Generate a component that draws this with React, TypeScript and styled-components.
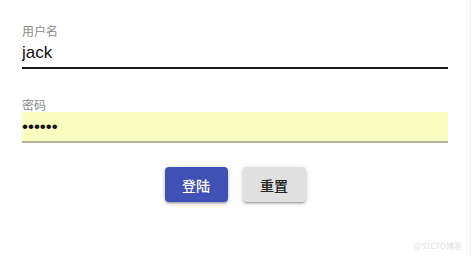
import React from "react";
import styled, { createGlobalStyle } from "styled-components";

const Global = createGlobalStyle`
  html, body { margin: 0; padding: 0; background: #fff; }
  body { font-family: "Liberation Sans", "Noto Sans CJK SC", sans-serif; }
  * { box-sizing: border-box; }
`;

const Page = styled.div`
  position: relative;
  width: 471px;
  height: 256px;
  border-right: 1px solid #f2f2f2;
  padding: 23px 0 0 22px;
`;

const Form = styled.form`
  width: 426px;
  display: flex;
  flex-direction: column;
`;

const Field = styled.div<{ $gap?: number }>`
  display: flex;
  flex-direction: column;
  margin-top: ${(p) => p.$gap ?? 0}px;
`;

const Label = styled.label`
  font-family: "Noto Sans CJK SC", sans-serif;
  font-size: 12px;
  line-height: 15px;
  color: #8a8a8a;
`;

const Input = styled.input<{ $autofill?: boolean }>`
  display: block;
  width: 100%;
  height: 31px;
  margin: 0;
  padding: 0;
  border: none;
  border-bottom: 2px solid ${(p) => (p.$autofill ? "#b3b39c" : "#1a1a1a")};
  background: ${(p) => (p.$autofill ? "#fafdc0" : "transparent")};
  font-family: "Liberation Sans", sans-serif;
  font-size: 17px;
  color: #111;
  outline: none;
`;

const Actions = styled.div`
  display: flex;
  justify-content: center;
  gap: 15px;
  margin-top: 24px;
`;

const Button = styled.button<{ $primary?: boolean }>`
  width: 63px;
  height: 35px;
  border: none;
  border-radius: 4px;
  font-family: "Noto Sans CJK SC", sans-serif;
  font-size: 14px;
  font-weight: 500;
  background: ${(p) => (p.$primary ? "#3f51b5" : "#e0e0e0")};
  color: ${(p) => (p.$primary ? "#fff" : "#222")};
  box-shadow: 0 1px 5px rgba(0, 0, 0, 0.2), 0 2px 2px rgba(0, 0, 0, 0.14),
    0 3px 1px -2px rgba(0, 0, 0, 0.12);
  cursor: pointer;
`;

const Watermark = styled.div`
  position: absolute;
  right: 8px;
  bottom: 5px;
  font-family: "Noto Sans CJK SC", sans-serif;
  font-size: 8px;
  color: #e2e2e2;
`;

export default function App() {
  return (
    <>
      <Global />
      <Page>
        <Form onSubmit={(e) => e.preventDefault()}>
          <Field>
            <Label>用户名</Label>
            <Input defaultValue="jack" />
          </Field>
          <Field $gap={28}>
            <Label>密码</Label>
            <Input type="password" defaultValue="123456" $autofill />
          </Field>
          <Actions>
            <Button type="submit" $primary>
              登陆
            </Button>
            <Button type="button">重置</Button>
          </Actions>
        </Form>
        <Watermark>@51CTO博客</Watermark>
      </Page>
    </>
  );
}
